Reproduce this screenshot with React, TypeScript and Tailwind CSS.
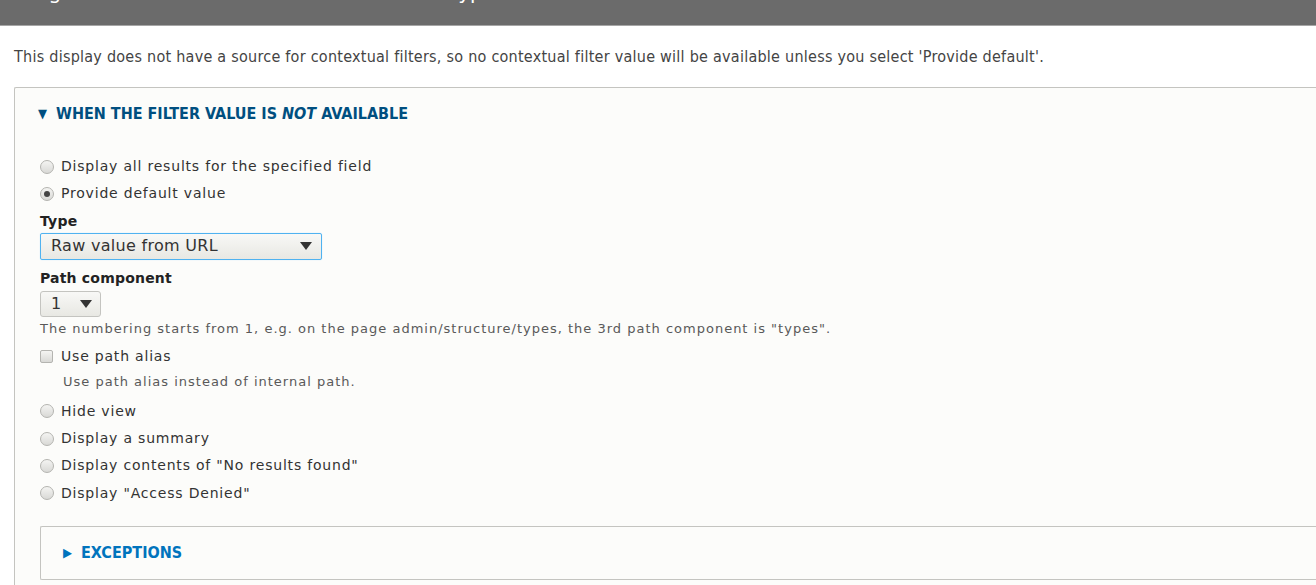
import React from "react";

const body = { fontFamily: '"DejaVu Sans", Verdana, sans-serif' };
const cond = { fontFamily: '"DejaVu Sans Condensed", "DejaVu Sans", sans-serif', fontStretch: "condensed" as const };

const Radio = ({ checked = false, label }: { checked?: boolean; label: string }) => (
  <div className="flex items-center h-[27.3px]">
    <span className="w-[14px] h-[14px] rounded-full border border-[#b4b4b0] bg-gradient-to-b from-[#f4f4f2] to-[#d9d9d6] mr-[7px] flex items-center justify-center">
      {checked && <span className="w-[6px] h-[6px] rounded-full bg-[#444]" />}
    </span>
    <span className="text-[14px] text-[#333] tracking-[0.8px]">{label}</span>
  </div>
);

const Arrow = () => (
  <svg width="12" height="8" viewBox="0 0 12 8"><path d="M0 0h12L6 8z" fill="#333" /></svg>
);

export default function App() {
  return (
    <div className="w-[1316px] h-[585px] overflow-hidden bg-white" style={body}>
      <div className="h-[26px] bg-[#6b6b6b] border-b border-[#a6a6a6] overflow-hidden">
        <div className="text-white text-[20px] leading-[24px] -mt-[20px] -ml-[3px] whitespace-nowrap">
          Configure contextual filter: Content: Content type
        </div>
      </div>

      <p className="mt-[20px] ml-[14px] text-[16px] leading-[22px] tracking-[0.25px] text-[#444]" style={cond}>
        This display does not have a source for contextual filters, so no contextual filter value will be available unless you select 'Provide default'.
      </p>

      <div className="ml-[14px] mt-[19px] border border-[#c4c4c0] border-r-0 rounded-tl-[2px] bg-[#fcfcfa] pl-[23px] pt-[16px] pb-[40px]">
        <div className="flex items-center h-[20px] text-[#004f80] font-bold text-[16px]" style={cond}>
          <span className="text-[13px] mr-[9px]">▼</span>
          WHEN THE FILTER VALUE IS&nbsp;<i>NOT</i>&nbsp;AVAILABLE
        </div>

        <div className="mt-[29px] pl-[2px]">
          <Radio label="Display all results for the specified field" />
          <Radio checked label="Provide default value" />
          <div className="text-[14px] font-bold text-[#222] leading-[18px] tracking-[0.2px] mt-[4px]">Type</div>
          <div className="w-[282px] h-[27px] border border-[#4fb2f0] rounded-[2px] bg-gradient-to-b from-[#f8f8f6] to-[#e8e8e3] shadow-[0_0_1px_#9fd4ff] flex items-center justify-between pl-[10px] pr-[9px] mt-[3px]">
            <span className="text-[16px] text-[#333] tracking-[0.3px]">Raw value from URL</span>
            <Arrow />
          </div>
          <div className="text-[14px] font-bold text-[#222] leading-[18px] tracking-[0.2px] mt-[9px]">Path component</div>
          <div className="w-[61px] h-[26px] border border-[#c4c4c0] rounded-[3px] bg-gradient-to-b from-[#f8f8f6] to-[#e8e8e3] flex items-center justify-between pl-[10px] pr-[8px] mt-[4px]">
            <span className="text-[16px] text-[#333]">1</span>
            <Arrow />
          </div>
          <div className="text-[13px] text-[#595959] mt-[4px] leading-[16px] tracking-[1px]">
            The numbering starts from 1, e.g. on the page admin/structure/types, the 3rd path component is "types".
          </div>
          <div className="flex items-center h-[27px] mt-[6px]">
            <span className="w-[13px] h-[13px] rounded-[2px] border border-[#b4b4b0] bg-gradient-to-b from-[#f4f4f2] to-[#d9d9d6] mr-[8px]" />
            <span className="text-[14px] text-[#333] tracking-[0.8px]">Use path alias</span>
          </div>
          <div className="text-[13px] text-[#595959] ml-[23px] mt-[4px] leading-[16px] tracking-[1px] mb-[8px]">
            Use path alias instead of internal path.
          </div>
          <Radio label="Hide view" />
          <Radio label="Display a summary" />
          <Radio label={'Display contents of "No results found"'} />
          <Radio label={'Display "Access Denied"'} />
        </div>

        <div className="ml-[2px] mt-[19px] h-[54px] border border-[#c4c4c0] border-r-0 rounded-l-[2px] flex items-center pl-[22px] text-[#0074bd] font-bold text-[16px]" style={cond}>
          <span className="text-[13px] mr-[9px]">▶</span>
          EXCEPTIONS
        </div>
      </div>
    </div>
  );
}
